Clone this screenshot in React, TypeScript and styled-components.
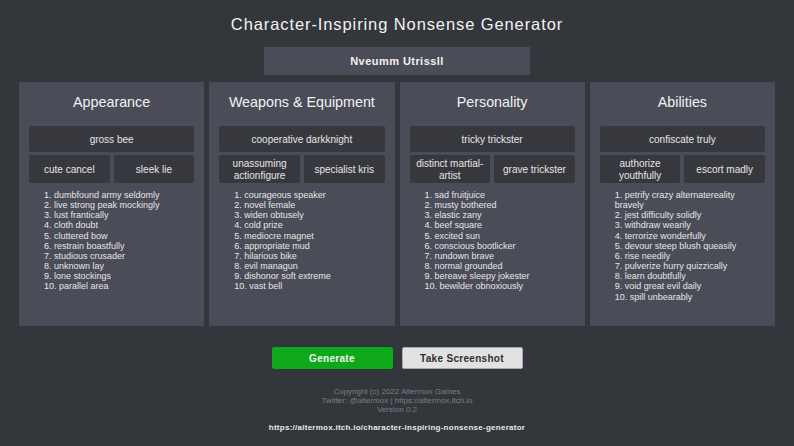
import React from "react";
import styled, { createGlobalStyle } from "styled-components";

const Global = createGlobalStyle`
  html, body { margin: 0; padding: 0; background: #33363b; }
  body { font-family: "Liberation Sans", Arial, sans-serif; }
  * { box-sizing: border-box; }
`;

const Page = styled.div`
  width: 794px;
  height: 446px;
  background: #33363b;
  display: flex;
  flex-direction: column;
  align-items: center;
  padding-top: 14px;
  overflow: hidden;
`;

const Title = styled.h1`
  margin: 0;
  font-size: 16.5px;
  line-height: 20px;
  font-weight: 400;
  letter-spacing: 0.9px;
  color: #f2f2f2;
`;

const NameBox = styled.div`
  margin-top: 13px;
  width: 266px;
  height: 28px;
  background: #4a4c57;
  display: flex;
  align-items: center;
  justify-content: center;
  color: #f2f2f2;
  font-size: 11px;
  font-weight: 700;
  letter-spacing: 0.45px;
`;

const Columns = styled.div`
  margin-top: 7px;
  width: 100%;
  padding: 0 19px;
  display: grid;
  grid-template-columns: repeat(4, 1fr);
  gap: 5px;
`;

const Panel = styled.section`
  height: 244px;
  background: #4a4c57;
  padding: 12px 10px 10px;
  display: flex;
  flex-direction: column;
`;

const PanelTitle = styled.h2`
  margin: 0;
  text-align: center;
  font-size: 14.3px;
  line-height: 17px;
  font-weight: 400;
  color: #f2f2f2;
`;

const Chip = styled.div<{ $tall?: boolean }>`
  height: ${(p) => (p.$tall ? 28 : 26)}px;
  background: #36383e;
  border-radius: 2px;
  display: flex;
  align-items: center;
  justify-content: center;
  text-align: center;
  color: #e6e6e6;
  font-size: 10px;
  line-height: 12px;
  padding: 1px 4px 0;
`;

const Main = styled.div`
  margin-top: 15px;
`;

const Pair = styled.div`
  margin-top: 3px;
  display: grid;
  grid-template-columns: 1fr 1fr;
  gap: 4px;
`;

const List = styled.div`
  margin-top: 7px;
  padding: 0 12px 0 15px;
  color: #e6e6e6;
  font-size: 9px;
  line-height: 10.15px;
`;

const Actions = styled.div`
  margin-top: 21px;
  display: flex;
  gap: 9px;
`;

const Button = styled.button<{ $primary?: boolean }>`
  width: 121px;
  height: 22px;
  border-radius: 2px;
  font-family: "Liberation Sans", Arial, sans-serif;
  font-size: 10px;
  font-weight: 700;
  letter-spacing: 0.3px;
  cursor: pointer;
  padding: 0;
  background: ${(p) => (p.$primary ? "#0da91b" : "#e2e2e2")};
  color: ${(p) => (p.$primary ? "#f4f4f4" : "#2e2f33")};
  border: 1px solid ${(p) => (p.$primary ? "#0da91b" : "#a9aaad")};
`;

const Credits = styled.div`
  margin-top: 18px;
  text-align: center;
  color: #7b7e85;
  font-size: 8px;
  line-height: 9.2px;
`;

const Url = styled.div`
  margin-top: 8px;
  color: #e8e8e8;
  font-size: 8px;
  line-height: 10px;
  font-weight: 700;
  letter-spacing: 0.26px;
`;

type Category = {
  title: string;
  main: string;
  pair: [string, string];
  items: string[];
};

const categories: Category[] = [
  {
    title: "Appearance",
    main: "gross bee",
    pair: ["cute cancel", "sleek lie"],
    items: [
      "dumbfound army seldomly",
      "live strong peak mockingly",
      "lust frantically",
      "cloth doubt",
      "cluttered bow",
      "restrain boastfully",
      "studious crusader",
      "unknown lay",
      "lone stockings",
      "parallel area",
    ],
  },
  {
    title: "Weapons & Equipment",
    main: "cooperative darkknight",
    pair: ["unassuming actionfigure", "specialist kris"],
    items: [
      "courageous speaker",
      "novel female",
      "widen obtusely",
      "cold prize",
      "mediocre magnet",
      "appropriate mud",
      "hilarious bike",
      "evil managun",
      "dishonor soft extreme",
      "vast bell",
    ],
  },
  {
    title: "Personality",
    main: "tricky trickster",
    pair: ["distinct martial-artist", "grave trickster"],
    items: [
      "sad fruitjuice",
      "musty bothered",
      "elastic zany",
      "beef square",
      "excited sun",
      "conscious bootlicker",
      "rundown brave",
      "normal grounded",
      "bereave sleepy jokester",
      "bewilder obnoxiously",
    ],
  },
  {
    title: "Abilities",
    main: "confiscate truly",
    pair: ["authorize youthfully", "escort madly"],
    items: [
      "petrify crazy alternatereality bravely",
      "jest difficulty solidly",
      "withdraw wearily",
      "terrorize wonderfully",
      "devour steep blush queasily",
      "rise needily",
      "pulverize hurry quizzically",
      "learn doubtfully",
      "void great evil daily",
      "spill unbearably",
    ],
  },
];

export default function App() {
  return (
    <>
      <Global />
      <Page>
        <Title>Character-Inspiring Nonsense Generator</Title>
        <NameBox>Nveumm Utrissll</NameBox>
        <Columns>
          {categories.map((c) => (
            <Panel key={c.title}>
              <PanelTitle>{c.title}</PanelTitle>
              <Main>
                <Chip>{c.main}</Chip>
              </Main>
              <Pair>
                <Chip $tall>{c.pair[0]}</Chip>
                <Chip $tall>{c.pair[1]}</Chip>
              </Pair>
              <List>
                {c.items.map((it, i) => (
                  <div key={i}>
                    {i + 1}. {it}
                  </div>
                ))}
              </List>
            </Panel>
          ))}
        </Columns>
        <Actions>
          <Button $primary>Generate</Button>
          <Button>Take Screenshot</Button>
        </Actions>
        <Credits>
          <div>Copyright (c) 2022 Altermox Games</div>
          <div>Twitter: @altermox | https://altermox.itch.io</div>
          <div>Version 0.2</div>
        </Credits>
        <Url>https://altermox.itch.io/character-inspiring-nonsense-generator</Url>
      </Page>
    </>
  );
}
